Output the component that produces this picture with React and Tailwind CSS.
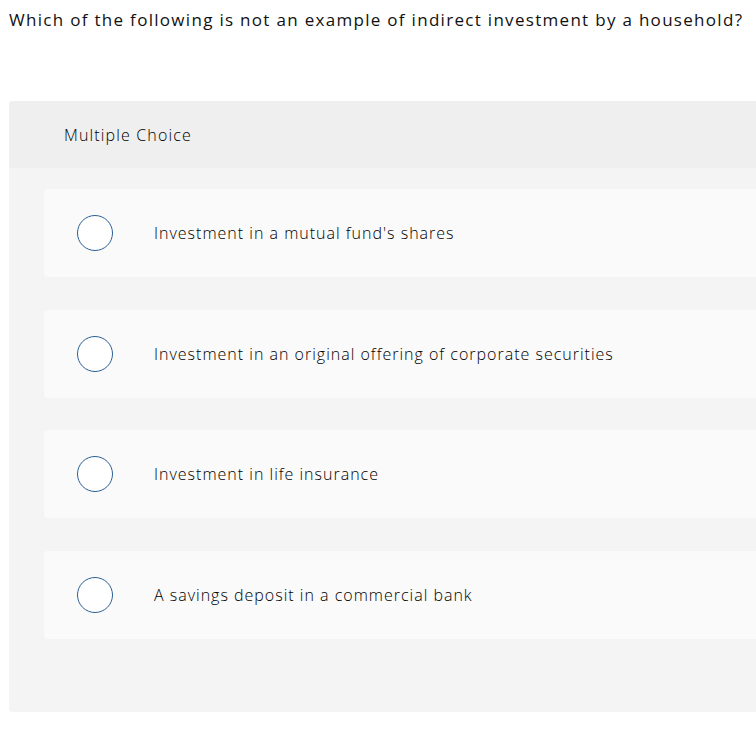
import React from 'react';

const choices = [
  "Investment in a mutual fund's shares",
  'Investment in an original offering of corporate securities',
  'Investment in life insurance',
  'A savings deposit in a commercial bank',
];

export default function App() {
  return (
    <div className="w-[756px] h-[737px] overflow-hidden bg-white text-[#111]" style={{ fontFamily: '"Open Sans", Arial, sans-serif' }}>
      <h1 className="pl-[9px] pt-[9px] text-[17px] leading-[22px] font-medium tracking-[1.3px] whitespace-nowrap">
        Which of the following is not an example of indirect investment by a household?
      </h1>
      <div className="ml-[9px] mt-[70px] w-[780px] rounded-l-[4px] bg-[#f4f4f4] pb-[73px]">
        <div className="h-[67px] flex items-center pl-[55px] bg-[#efefef] rounded-tl-[4px] text-[16px] font-light tracking-[1.15px] text-black">
          Multiple Choice
        </div>
        <div className="pl-[35px] pt-[21px] flex flex-col gap-[32.5px]">
          {choices.map((c) => (
            <div key={c} className="h-[88px] rounded-l-[4px] bg-[#fafafa] flex items-center">
              <span className="ml-[33px] w-[36px] h-[36px] rounded-full border-[1.5px] border-[#2c5f95] bg-white shrink-0" />
              <span className="ml-[41px] text-[16px] font-light tracking-[1px] whitespace-nowrap text-black">{c}</span>
            </div>
          ))}
        </div>
      </div>
    </div>
  );
}
